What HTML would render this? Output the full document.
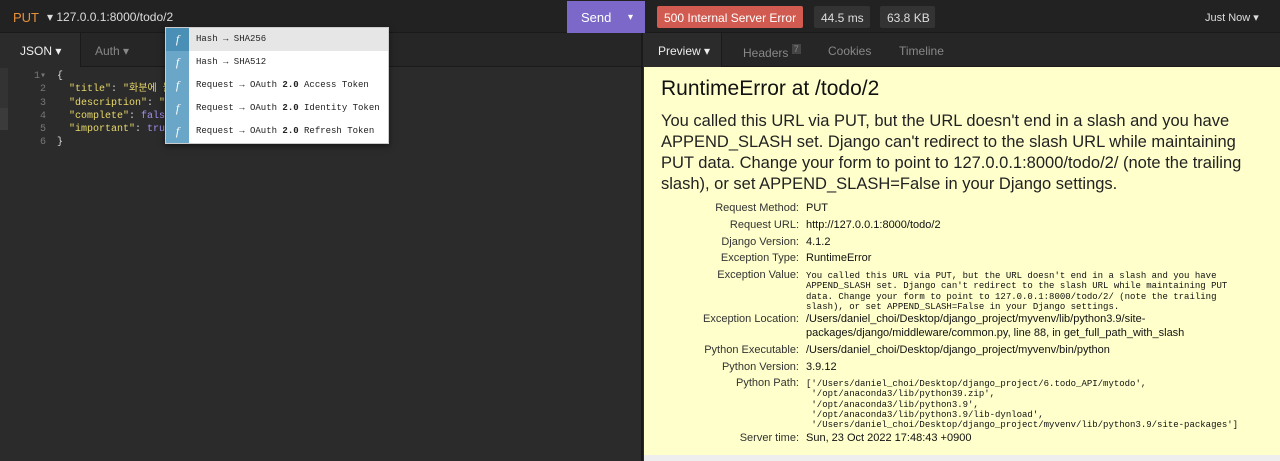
<!DOCTYPE html>
<html><head><meta charset="utf-8"><style>
*{margin:0;padding:0;box-sizing:border-box}
html,body{width:1280px;height:461px;overflow:hidden}
body{background:#2b2b2b;font-family:"Liberation Sans","Noto Sans CJK KR",sans-serif;position:relative;color:#ddd}
.a{position:absolute}
.mono{font-family:"Liberation Mono","Noto Sans CJK KR",monospace}
.l{position:absolute;right:481px;font-size:11px;color:#333;text-align:right;white-space:nowrap}
.v{position:absolute;left:162px;font-size:11px;color:#111;white-space:nowrap}
</style></head><body>
<div class="a" style="left:0;top:0;width:1280px;height:33px;background:#222;border-bottom:1px solid #1a1a1a"></div>
<div class="a" style="left:13px;top:10px;font-size:13px;color:#e8923a">PUT</div>
<div class="a" style="left:47px;top:10px;font-size:12px;color:#ddd">▾ 127.0.0.1:8000/todo/2</div>
<div class="a" style="left:567px;top:1px;width:78px;height:32px;background:#7b68c9"></div>
<div class="a" style="left:581px;top:10px;font-size:13px;color:#fff">Send</div>
<div class="a" style="left:628px;top:12px;font-size:10px;color:#fff">▾</div>
<div class="a" style="left:657px;top:6px;width:146px;height:22px;background:#d15b50;border-radius:2px;font-size:12px;color:#fff;padding:5px 0 0 7px">500 Internal Server Error</div>
<div class="a" style="left:814px;top:6px;width:56px;height:22px;background:#333;border-radius:2px;font-size:12px;color:#ddd;padding:5px 0 0 7px">44.5 ms</div>
<div class="a" style="left:880px;top:6px;width:55px;height:22px;background:#333;border-radius:2px;font-size:12px;color:#ddd;padding:5px 0 0 7px">63.8 KB</div>
<div class="a" style="left:1205px;top:11px;font-size:11px;color:#ddd">Just Now ▾</div>
<div class="a" style="left:0;top:33px;width:643px;height:34px;background:#262626;border-bottom:1px solid #1a1a1a"></div>
<div class="a" style="left:0;top:33px;width:81px;height:34px;background:#2b2b2b;border-right:1px solid #1a1a1a"></div>
<div class="a" style="left:20px;top:44px;font-size:12px;color:#eee">JSON ▾</div>
<div class="a" style="left:95px;top:44px;font-size:12px;color:#888">Auth ▾</div>
<div class="a" style="left:0;top:68px;width:8px;height:40px;background:#333"></div>
<div class="a" style="left:0;top:108px;width:8px;height:22px;background:#3b3b3b"></div>
<div class="a mono" style="left:30px;top:70px;font-size:10px;line-height:13.3px;color:#777;text-align:right;width:16px">1▾<br>2<br>3<br>4<br>5<br>6</div>
<div class="a mono" style="left:57px;top:70px;font-size:10px;line-height:13.3px;color:#ddd;white-space:pre">{
  <span style="color:#e8d96a">"title"</span>: <span style="color:#e8d96a">"화분에 물주</span>
  <span style="color:#e8d96a">"description"</span>: <span style="color:#e8d96a">"물</span>
  <span style="color:#e8d96a">"complete"</span>: <span style="color:#a48ef0">false</span>
  <span style="color:#e8d96a">"important"</span>: <span style="color:#a48ef0">true</span>
}</div>
<div class="a" style="left:165px;top:27px;width:224px;height:117px;background:#fff;border:1px solid #ccc;box-shadow:0 2px 6px rgba(0,0,0,.5)">
<div class="a" style="left:0;top:0;width:23px;height:115px;background:#6aa6c8"></div>
<div class="a" style="left:0;top:0;width:222px;height:23px;background:#e6e6e6"></div>
<div class="a" style="left:0;top:0;width:23px;height:23px;background:#4a8fb5"></div>
<div class="a" style="left:0;top:0;width:23px;font-family:'Liberation Serif',serif;font-size:12px;line-height:23px;color:#fff;text-align:center;font-style:italic"><div>f</div><div>f</div><div>f</div><div>f</div><div>f</div></div>
<div class="a mono" style="left:30px;top:0;font-size:9px;line-height:23px;color:#222;white-space:pre">Hash → SHA256
Hash → SHA512
Request → OAuth <b>2.0</b> Access Token
Request → OAuth <b>2.0</b> Identity Token
Request → OAuth <b>2.0</b> Refresh Token</div>
</div>
<div class="a" style="left:641px;top:33px;width:2px;height:428px;background:#1a1a1a"></div>
<div class="a" style="left:643px;top:33px;width:637px;height:34px;background:#262626;border-bottom:1px solid #1a1a1a"></div>
<div class="a" style="left:643px;top:33px;width:79px;height:34px;background:#2b2b2b;border-right:1px solid #1a1a1a"></div>
<div class="a" style="left:658px;top:44px;font-size:12px;color:#eee">Preview ▾</div>
<div class="a" style="left:743px;top:44px;font-size:12px;color:#888">Headers <sup style="background:#444;font-size:9px;padding:0 2px">7</sup></div>
<div class="a" style="left:828px;top:44px;font-size:12px;color:#888">Cookies</div>
<div class="a" style="left:899px;top:44px;font-size:12px;color:#888">Timeline</div>
<div class="a" style="left:644px;top:67px;width:636px;height:388px;background:#ffffcc;color:#000">
<div class="a" style="left:17px;top:10px;font-size:21px;color:#111">RuntimeError at /todo/2</div>
<div class="a" style="left:17px;top:44px;width:612px;font-size:16.5px;line-height:21px;color:#222">You called this URL via PUT, but the URL doesn't end in a slash and you have APPEND_SLASH set. Django can't redirect to the slash URL while maintaining PUT data. Change your form to point to 127.0.0.1:8000/todo/2/ (note the trailing slash), or set APPEND_SLASH=False in your Django settings.</div>
<div class="l" style="top:135px">Request Method:</div><div class="v" style="top:135px">PUT</div>
<div class="l" style="top:152px">Request URL:</div><div class="v" style="top:152px">http://127.0.0.1:8000/todo/2</div>
<div class="l" style="top:169px">Django Version:</div><div class="v" style="top:169px">4.1.2</div>
<div class="l" style="top:185px">Exception Type:</div><div class="v" style="top:185px">RuntimeError</div>
<div class="l" style="top:202px">Exception Value:</div>
<div class="a mono" style="left:162px;top:204px;font-size:9px;line-height:10.3px;white-space:pre;color:#111">You called this URL via PUT, but the URL doesn't end in a slash and you have
APPEND_SLASH set. Django can't redirect to the slash URL while maintaining PUT
data. Change your form to point to 127.0.0.1:8000/todo/2/ (note the trailing
slash), or set APPEND_SLASH=False in your Django settings.</div>
<div class="l" style="top:246px">Exception Location:</div>
<div class="v" style="top:246px;line-height:13.5px">/Users/daniel_choi/Desktop/django_project/myvenv/lib/python3.9/site-<br>packages/django/middleware/common.py, line 88, in get_full_path_with_slash</div>
<div class="l" style="top:277px">Python Executable:</div><div class="v" style="top:277px">/Users/daniel_choi/Desktop/django_project/myvenv/bin/python</div>
<div class="l" style="top:294px">Python Version:</div><div class="v" style="top:294px">3.9.12</div>
<div class="l" style="top:310px">Python Path:</div>
<div class="a mono" style="left:162px;top:312px;font-size:9px;line-height:10.3px;white-space:pre;color:#111">['/Users/daniel_choi/Desktop/django_project/6.todo_API/mytodo',
 '/opt/anaconda3/lib/python39.zip',
 '/opt/anaconda3/lib/python3.9',
 '/opt/anaconda3/lib/python3.9/lib-dynload',
 '/Users/daniel_choi/Desktop/django_project/myvenv/lib/python3.9/site-packages']</div>
<div class="l" style="top:365px">Server time:</div><div class="v" style="top:365px">Sun, 23 Oct 2022 17:48:43 +0900</div>
</div>
<div class="a" style="left:644px;top:455px;width:636px;height:6px;background:#eee"></div>
</body></html>
